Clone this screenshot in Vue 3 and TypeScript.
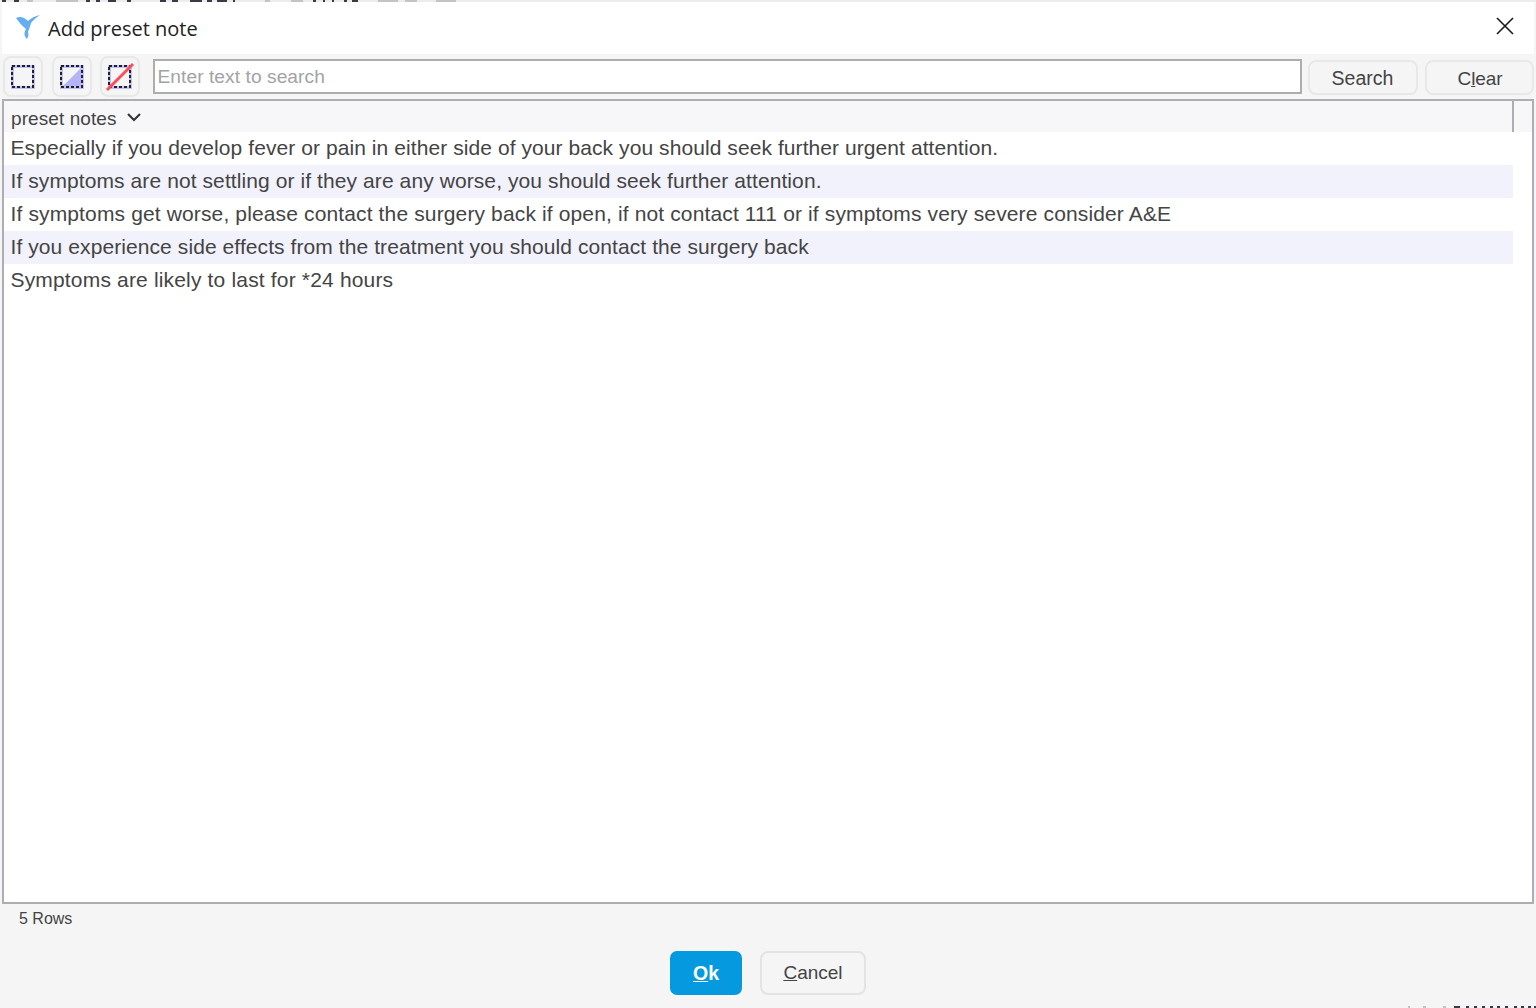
<script setup lang="ts">
interface Row { text: string; tracking: number }
interface Mark { x: number; w: number; dark: boolean }

const rows: Row[] = [
  { text: 'Especially if you develop fever or pain in either side of your back you should seek further urgent attention.', tracking: 0.075 },
  { text: 'If symptoms are not settling or if they are any worse, you should seek further attention.', tracking: 0.09 },
  { text: 'If symptoms get worse, please contact the surgery back if open, if not contact 111 or if symptoms very severe consider A&E', tracking: 0.135 },
  { text: 'If you experience side effects from the treatment you should contact the surgery back', tracking: 0.085 },
  { text: 'Symptoms are likely to last for *24 hours', tracking: 0.17 },
]

const mk = (x: number, w: number, dark = true): Mark => ({ x, w, dark })
const topMarks: Mark[] = [
  mk(2, 4), mk(14, 5), mk(27, 6, false), mk(56, 22, false), mk(86, 4), mk(96, 4), mk(108, 8), mk(127, 4),
  mk(160, 6), mk(172, 6), mk(190, 12), mk(207, 5), mk(217, 10), mk(233, 2), mk(265, 5, false), mk(291, 12, false),
  mk(313, 3), mk(323, 2), mk(332, 2), mk(344, 3), mk(352, 6), mk(378, 20, false), mk(405, 12, false), mk(436, 20, false),
]
const bottomMarks: Mark[] = [
  mk(1408, 2, false), mk(1423, 3, false), mk(1443, 3, false), mk(1454, 6), mk(1466, 3), mk(1474, 3), mk(1482, 3),
  mk(1490, 3), mk(1497, 3), mk(1505, 3), mk(1514, 3), mk(1521, 3), mk(1528, 3), mk(1534, 2),
]
</script>

<template>
  <div class="dialog">
    <div class="strip">
      <i v-for="m in topMarks" :key="m.x" class="mark" :class="{ dark: m.dark }" :style="{ left: m.x + 'px', width: m.w + 'px' }"></i>
    </div>
    <header class="title">
      <svg class="logo" width="26" height="28" viewBox="0 0 26 28">
        <defs>
          <filter id="soft" x="-10%" y="-10%" width="120%" height="120%">
            <feGaussianBlur stdDeviation="0.7" />
          </filter>
        </defs>
        <path d="M1 5 C5 3 9 4 13 8 C16 5 20 3 25 2 C21 5 18 7 16 10 C15 14 14 16 13 19 C14 22 13 24 12 26 C10 24 8 21 11 16 C7 13 4 9 1 5Z" fill="#62aef0" filter="url(#soft)" />
      </svg>
      <span class="title-text">Add preset note</span>
      <svg class="close" width="18" height="18" viewBox="0 0 18 18">
        <path d="M1 1 L17 17 M17 1 L1 17" stroke="#1a1a1a" stroke-width="1.6" fill="none" />
      </svg>
    </header>
    <div class="toolbar">
      <button class="icon-btn">
        <svg width="28" height="28" viewBox="0 0 28 28">
          <rect x="3.5" y="3.5" width="21" height="21" fill="none" stroke="#c0c0fa" stroke-width="3" />
          <rect x="3" y="3" width="21" height="21" fill="none" stroke="#222" stroke-width="2" stroke-dasharray="3 2" />
        </svg>
      </button>
      <button class="icon-btn">
        <svg width="28" height="28" viewBox="0 0 28 28">
          <path d="M24 4 V24 H4Z" fill="#b4b4f6" />
          <rect x="3.5" y="3.5" width="21" height="21" fill="none" stroke="#c0c0fa" stroke-width="3" />
          <rect x="3" y="3" width="21" height="21" fill="none" stroke="#222" stroke-width="2" stroke-dasharray="3 2" />
        </svg>
      </button>
      <button class="icon-btn">
        <svg width="30" height="30" viewBox="0 0 30 30">
          <rect x="4.5" y="4.5" width="21" height="21" fill="none" stroke="#c0c0fa" stroke-width="3" />
          <rect x="4" y="4" width="21" height="21" fill="none" stroke="#222" stroke-width="2" stroke-dasharray="3 2" />
          <path d="M2 28 L28 2" stroke="#fa4f58" stroke-width="3" fill="none" />
        </svg>
      </button>
      <input class="search" type="text" placeholder="Enter text to search" />
      <button class="text-btn search-btn"><span>Search</span></button>
      <button class="text-btn clear-btn"><span>C<u>l</u>ear</span></button>
    </div>
    <section class="grid">
      <div class="grid-head">
        <span class="head-label">preset notes</span>
        <svg class="chev" width="14" height="9" viewBox="0 0 14 9">
          <path d="M1 1 L7 7 L13 1" stroke="#333" stroke-width="2" fill="none" />
        </svg>
        <span class="head-end"></span>
      </div>
      <div
        v-for="(r, i) in rows"
        :key="i"
        class="row"
        :class="{ alt: i % 2 === 1 }"
        :style="{ letterSpacing: r.tracking + 'px' }"
      >{{ r.text }}</div>
    </section>
    <div class="count">5 Rows</div>
    <footer class="actions">
      <button class="ok"><u>O</u>k</button>
      <button class="cancel"><u>C</u>ancel</button>
    </footer>
    <div class="edge-bottom">
      <i v-for="m in bottomMarks" :key="m.x" class="mark" :class="{ dark: m.dark }" :style="{ left: m.x + 'px', width: m.w + 'px' }"></i>
    </div>
  </div>
</template>

<style>
html, body { margin: 0; background: #f5f5f5; }
</style>

<style scoped>
.dialog {
  position: relative;
  width: 1536px;
  height: 1008px;
  box-sizing: border-box;
  padding: 0 2px;
  display: flex;
  flex-direction: column;
  background: #f5f5f5;
  font-family: "Liberation Sans", Arial, sans-serif;
  color: #444;
  overflow: hidden;
}
.strip { position: relative; height: 2px; flex: none; background: #ececec; margin: 0 -2px; }
.mark { position: absolute; top: 0; height: 2px; background: #c4c4c4; }
.mark.dark { background: #3c3a48; }
.edge-bottom { position: absolute; left: 0; right: 0; bottom: 0; height: 2px; }
.title {
  height: 52px;
  flex: none;
  background: #fff;
  display: flex;
  align-items: center;
  padding-left: 13px;
  padding-right: 20px;
}
.logo { margin-right: 7px; margin-top: -3px; }
.title-text {
  font-family: "Open Sans", sans-serif;
  font-size: 20px;
  color: #222;
}
.close { margin-left: auto; margin-top: -4px; }
.toolbar {
  height: 45px;
  flex: none;
  display: flex;
  align-items: flex-start;
  box-sizing: border-box;
  padding-top: 2px;
  padding-left: 1px;
}
button { font-family: inherit; cursor: default; }
.icon-btn {
  width: 40px;
  height: 41px;
  padding: 0;
  margin-right: 8.5px;
  background: #f5f5f5;
  border: 2px solid #e8e8e8;
  border-radius: 8px;
  display: flex;
  align-items: center;
  justify-content: center;
}
.search {
  width: 1149px;
  height: 35px;
  box-sizing: border-box;
  margin-left: 4px;
  margin-top: 3px;
  border: 2px solid #adadad;
  background: #fff;
  padding: 0 3px;
  font-family: inherit;
  font-size: 19.2px;
  letter-spacing: 0.05px;
  outline: none;
}
.search::placeholder { color: #a3a3a3; opacity: 1; }
.text-btn {
  height: 35px;
  margin-top: 4px;
  background: #f5f5f5;
  border: 2px solid #e8e8e8;
  border-radius: 8px;
  font-size: 19.5px;
  color: #444;
  padding: 2px 0 0;
}
.search-btn { width: 110px; margin-left: 6px; }
.clear-btn { width: 109px; margin-left: 7px; }
.clear-btn span { font-size: 19px; letter-spacing: -0.1px; position: relative; left: 1px; }
.grid {
  height: 805px;
  flex: none;
  box-sizing: border-box;
  border: 2px solid #adadb3;
  background: #fff;
  font-size: 21px;
}
.grid-head {
  height: 31px;
  background: #f7f7fa;
  display: flex;
  align-items: center;
  padding-left: 7px;
  font-size: 19px;
  letter-spacing: 0.08px;
}
.head-label { padding-top: 4px; }
.chev { margin-left: 10px; margin-top: 2px; }
.head-end {
  margin-left: auto;
  width: 20px;
  height: 100%;
  border-left: 2px solid #adadb3;
  box-sizing: border-box;
}
.row {
  height: 33px;
  line-height: 31px;
  width: 1509px;
  padding-left: 6.5px;
  box-sizing: border-box;
  white-space: nowrap;
}
.row.alt { background: #f2f2fc; }
.count {
  height: 30px;
  flex: none;
  font-size: 16px;
  line-height: 30px;
  padding-left: 17px;
  color: #444;
}
.actions {
  flex: 1;
  display: flex;
  justify-content: center;
  align-items: flex-start;
  gap: 18px;
  padding-top: 17px;
}
.ok {
  width: 72px;
  height: 44px;
  border: none;
  border-radius: 7px;
  background: #059ae0;
  color: #fff;
  font-size: 19.5px;
  font-weight: 700;
  padding: 0;
}
.cancel {
  width: 106px;
  height: 44px;
  border: 2px solid #e3e3e3;
  border-radius: 8px;
  background: #f5f5f5;
  color: #444;
  font-size: 19px;
  padding: 0;
}
</style>
